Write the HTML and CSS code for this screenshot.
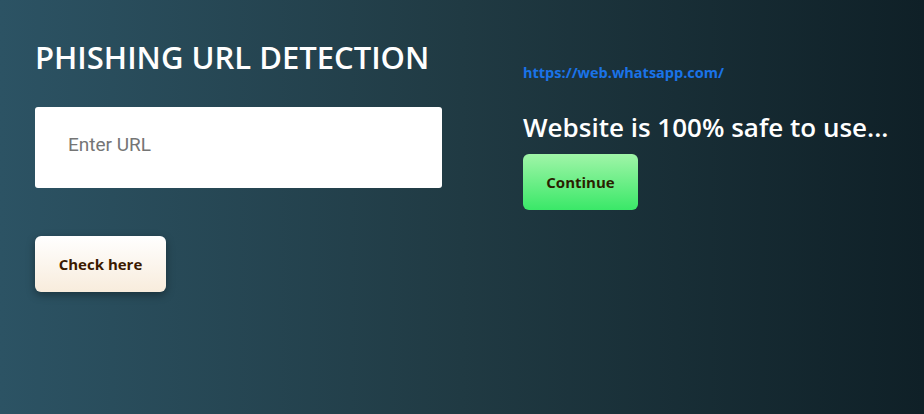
FILE: index.html
```html
<!DOCTYPE html>
<html>
<head>
<meta charset="utf-8">
<link rel="stylesheet" href="styles.css">
</head>
<body>
<main class="page">
  <section class="left">
    <h1 class="title">PHISHING URL DETECTION</h1>
    <input class="url-input" type="text" placeholder="Enter URL">
    <button class="btn check">Check here</button>
  </section>
  <section class="right">
    <a class="url-link" href="#">https://web.whatsapp.com/</a>
    <h2 class="verdict">Website is 100% safe to use...</h2>
    <button class="btn continue">Continue</button>
  </section>
</main>
</body>
</html>
```
FILE: styles.css
```css
html, body {
  margin: 0;
  height: 100%;
}
body {
  background: linear-gradient(to right, #2c5364, #203a43, #0f2027);
  font-family: "Open Sans", "Noto Sans", sans-serif;
  color: #fff;
}
.page {
  display: flex;
  gap: 81px;
  padding: 0 35px;
}
.left {
  width: 407px;
  display: flex;
  flex-direction: column;
  align-items: flex-start;
}
.title {
  margin: 36px 0 0 0;
  font-size: 31px;
  font-weight: 600;
  line-height: 42px;
}
.url-input {
  margin-top: 29px;
  width: 407px;
  height: 81px;
  box-sizing: border-box;
  border: none;
  border-radius: 3px;
  padding: 0 33px 6px;
  font-family: Roboto, sans-serif;
  font-size: 19px;
  color: #333;
  background: #fff;
  outline: none;
}
.url-input::placeholder {
  color: #757575;
}
.btn {
  border: none;
  border-radius: 6px;
  height: 56px;
  font-family: "Open Sans", sans-serif;
  font-weight: 700;
  font-size: 15px;
  cursor: pointer;
}
.check {
  margin-top: 48px;
  width: 131px;
  background: linear-gradient(to bottom, #ffffff, #f8ecdc);
  color: #3b1a00;
  box-shadow: 0 3px 8px rgba(0, 0, 0, 0.35);
}
.right {
  display: flex;
  flex-direction: column;
  align-items: flex-start;
}
.url-link {
  margin-top: 63px;
  font-size: 14.5px;
  font-weight: 700;
  line-height: 20px;
  color: #1a73e8;
  text-decoration: none;
}
.verdict {
  margin: 26px 0 0;
  font-size: 26px;
  font-weight: 600;
  line-height: 36px;
}
.continue {
  margin-top: 9px;
  width: 115px;
  background: linear-gradient(to bottom, #a0f5a8, #3ae868);
  color: #2a1f00;
}
```
